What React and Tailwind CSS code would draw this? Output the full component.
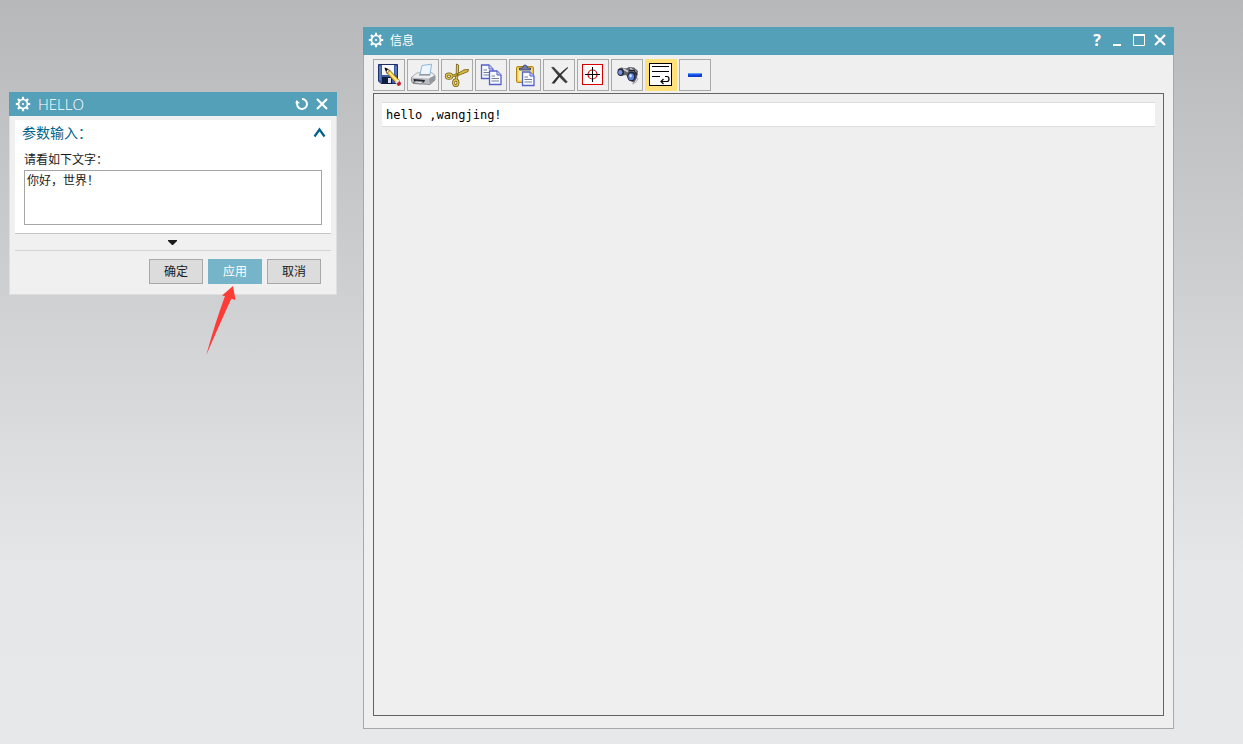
import React from "react";

function GearIcon() {
  return (
    <svg width="16" height="16" viewBox="-8 -8 16 16" aria-hidden="true" className="shrink-0">
      <g fill="white">
        {[0, 45, 90, 135, 180, 225, 270, 315].map((a) => (
          <rect key={a} x="-1.1" y="-7.2" width="2.2" height="2.8" transform={`rotate(${a})`} />
        ))}
      </g>
      <circle r="4.5" fill="none" stroke="white" strokeWidth="1.7" />
      <circle r="1.1" fill="white" />
    </svg>
  );
}

function CloseIcon() {
  return (
    <svg width="12" height="12" viewBox="0 0 12 12" aria-hidden="true">
      <path d="M1 1 L11 11 M11 1 L1 11" stroke="white" strokeWidth="2.1" />
    </svg>
  );
}

function PageShape({ x, y }) {
  return (
    <g transform={`translate(${x} ${y})`}>
      <path d="M0.5 0.5 H8 L12 4.5 V14 H0.5 Z" fill="#f7f9ff" stroke="#5560c8" strokeWidth="1.3" />
      <path d="M8 0.5 V4.5 H12" fill="#c9d0f5" stroke="#5560c8" />
      <path d="M2.5 5.5 H6 M2.5 8 H10 M2.5 10.5 H10" stroke="#77809a" strokeWidth="1.1" />
    </g>
  );
}

function SaveIcon() {
  return (
    <>
      <path d="M4.5 4.5 H23.5 V23.5 H7 L4.5 21 Z" fill="#3f5ca6" stroke="#1b2f6d" />
      <rect x="8" y="5" width="12" height="10" fill="#f7f9ff" />
      <rect x="8" y="17" width="10" height="7" fill="#101c3c" />
      <rect x="14" y="18" width="3" height="5" fill="#d7def2" />
      <path d="M6 6 V20 M22 6 V15" stroke="#7d93cc" />
      <path d="M11.5 8.5 L16 10.5 L25.3 20.3 L22.3 23.3 L13.3 13.5 Z" fill="#f7c62e" stroke="#7c5210" strokeWidth="0.7" />
      <path d="M11 8 L16 10.5 L13 13.5 Z" fill="#f6dfae" stroke="#000" strokeWidth="0.5" />
      <path d="M10.5 7.5 L14 9 L12 11.5 Z" fill="#000" />
      <path d="M15 12 L23.5 21.3" stroke="#fff2a0" strokeWidth="1.3" />
      <path d="M21.2 22.6 L24.2 19.6 L25.5 21 L22.5 24 Z" fill="#e8e8ee" />
      <path d="M22.5 24 L25.5 21 L27 23 Q27 26 24 26 Z" fill="#c8202a" />
    </>
  );
}

function PrintIcon() {
  return (
    <>
      <path d="M3.5 17.5 L9 13 H24 L27 15.5 V20 L22 24.5 L5 23.5 L3.5 21 Z" fill="#b9bdc1" stroke="#7c8287" strokeWidth="0.8" />
      <path d="M3.8 17.5 L9 13.3 H24 L26.6 15.5 L21 18.5 Z" fill="#eceef0" />
      <path d="M21 18.5 L26.8 15.5 V20 L22 24 Z" fill="#92989e" />
      <path d="M12 14.5 L14 5.5 L23.5 4.2 L22 14.5 Z" fill="#edf6ff" stroke="#78a4cf" strokeWidth="0.8" />
      <path d="M5.5 19 L17 20 L16 22.5 L6 21.5 Z" fill="#24282c" />
      <path d="M5 22.5 L8 21 L15 21.5 L13 24 Z" fill="#dfe3e6" stroke="#555b60" strokeWidth="0.6" />
      <path d="M11 15 H22" stroke="#7c8287" />
    </>
  );
}

function CutIcon() {
  return (
    <>
      <g fill="none" stroke="#6e5a12" strokeWidth="2.8">
        <ellipse cx="7" cy="16.2" rx="2.8" ry="2.2" />
        <ellipse cx="13.8" cy="22.8" rx="2.2" ry="2.8" />
      </g>
      <path d="M14.5 4 L16.6 5 L16.4 14 L14.6 20.5 L13 19.8 L14.2 14 Z" fill="#e6cc55" stroke="#6e5a12" strokeWidth="0.8" />
      <path d="M26.5 9.5 L26 11.6 L17 15.2 L10 17 L9.5 15.4 L16 13.4 L22 9.8 Z" fill="#d9bb3e" stroke="#6e5a12" strokeWidth="0.8" />
      <g fill="none" stroke="#dfc450" strokeWidth="1.4">
        <ellipse cx="7" cy="16.2" rx="2.8" ry="2.2" />
        <ellipse cx="13.8" cy="22.8" rx="2.2" ry="2.8" />
      </g>
      <circle cx="15.6" cy="14.5" r="0.8" fill="#6e5a12" />
    </>
  );
}

function CopyIcon() {
  return (
    <>
      <PageShape x={5} y={4.5} />
      <PageShape x={13} y={10.5} />
    </>
  );
}

function PasteIcon() {
  return (
    <>
      <rect x="6.5" y="6.5" width="17" height="16" rx="1.5" fill="#f5cb45" stroke="#b3861a" />
      <rect x="8.5" y="9" width="13" height="11.5" fill="#fdf3b8" />
      <path d="M9.5 10 V8 H12.5 Q13 5 15 5 Q17 5 17.5 8 H20.5 V10 Z" fill="#6f7fae" stroke="#36436e" strokeWidth="0.9" />
      <PageShape x={12} y={11.5} />
    </>
  );
}

function DeleteIcon() {
  return (
    <>
      <path d="M7.5 7.5 L9.5 7 Q16 13.5 23.5 22 L21.5 23 Q14 16 7.5 7.5 Z" fill="#3a3d3a" stroke="#3a3d3a" strokeWidth="0.4" />
      <path d="M23.5 7 L24 8 Q16 15 10.5 23.5 L7.5 23.5 Q14 14.5 23.5 7 Z" fill="#2c2f2c" />
    </>
  );
}

function TargetIcon() {
  return (
    <>
      <rect x="4.5" y="4.5" width="20" height="20" fill="white" stroke="#d40000" />
      <circle cx="14.5" cy="14.5" r="4.5" fill="none" stroke="#d40000" strokeWidth="1.2" />
      <path d="M14.5 7 V22 M7 14.5 H22" stroke="black" />
    </>
  );
}

function FindIcon() {
  return (
    <>
      <path d="M5.5 9.5 L9 7.5 L14 8.5 L17 7 L22 7.5 L26 11 L25 18 L22 23 L17 20 L14 15 L8 16 Z" fill="#62656e" />
      <path d="M11 9 L16 11.5 M18 8.5 L24 12" stroke="#d0d2d8" strokeWidth="1.5" />
      <path d="M17 10.5 L22 10.5 L25 15" fill="none" stroke="#23252b" strokeWidth="1.4" />
      <ellipse cx="8.7" cy="12.3" rx="3.3" ry="3.8" fill="#24283a" />
      <ellipse cx="8.3" cy="12.3" rx="2.1" ry="2.6" fill="#6f91de" />
      <ellipse cx="19.5" cy="16.5" rx="4.2" ry="4.8" fill="#20243a" />
      <ellipse cx="19.2" cy="16.7" rx="2.9" ry="3.5" fill="#5b80da" />
      <ellipse cx="18.6" cy="15.8" rx="1.3" ry="1.7" fill="#cfe0ff" />
      <path d="M20 24 Q25 23 26 18" fill="none" stroke="#b8b8bb" strokeWidth="1.2" />
    </>
  );
}

function WrapIcon() {
  return (
    <>
      <rect x="3.5" y="3.5" width="22" height="22" fill="white" stroke="black" />
      <path d="M6 6.5 H23 M6 11.5 H23 M6 16.5 H14" stroke="black" />
      <path d="M19 16.5 H21 Q23 16.5 23 19 Q23 21.5 21 21.5 H15 M17.5 19 L15 21.5 L17.5 24" fill="none" stroke="black" strokeWidth="1.2" />
    </>
  );
}

function MinusIcon() {
  return (
    <>
      <rect x="8" y="13" width="14" height="4" fill="#0d3fd0" />
      <rect x="8" y="13" width="14" height="1" fill="#5f9bff" />
      <rect x="9" y="14" width="11" height="1" fill="#1e62f5" />
    </>
  );
}

const tools = [
  { name: "保存", Icon: SaveIcon },
  { name: "打印", Icon: PrintIcon },
  { name: "剪切", Icon: CutIcon },
  { name: "复制", Icon: CopyIcon },
  { name: "粘贴", Icon: PasteIcon },
  { name: "删除", Icon: DeleteIcon },
  { name: "定位", Icon: TargetIcon },
  { name: "查找", Icon: FindIcon },
  { name: "自动换行", Icon: WrapIcon, active: true },
  { name: "收起", Icon: MinusIcon },
];

function HelloDialog() {
  return (
    <section className="relative mt-[65px] w-[328px] shrink-0">
      <header className="flex h-6 items-center bg-[#54a0b9] pr-[9px] pl-1.5 text-white">
        <GearIcon />
        <h1 className="ml-[7px] grow text-[15px] font-light">HELLO</h1>
        <button aria-label="重置" className="mr-[7px]">
          <svg width="14" height="14" viewBox="0 0 14 14" aria-hidden="true">
            <path d="M7 2 A5 5 0 1 1 2.3 5.4" fill="none" stroke="white" strokeWidth="2" />
            <path d="M0.2 6.2 L1.6 3 L5 6.2 Z" fill="white" />
          </svg>
        </button>
        <button aria-label="关闭">
          <CloseIcon />
        </button>
      </header>
      <div className="border-x border-b border-[#dddee0] bg-[#f0f0f0] px-[5px] pt-1 pb-2.5">
        <div className="border-b border-[#c6c6c6] bg-white px-[9px] pb-2">
          <div className="-ml-0.5 flex h-[30px] items-start justify-between pt-1">
            <h2 className="text-[14px] leading-[18px] text-[#00638a]">参数输入：</h2>
            <button aria-label="折叠" className="-mr-1 pt-[3px]">
              <svg width="13" height="11" viewBox="0 0 13 11" aria-hidden="true">
                <path d="M1.5 9.5 L6.5 2.5 L11.5 9.5" fill="none" stroke="#00638a" strokeWidth="2.2" />
              </svg>
            </button>
          </div>
          <label htmlFor="message" className="block h-5 text-xs leading-5">请看如下文字：</label>
          <textarea
            id="message"
            defaultValue="你好，世界！"
            className="block h-[55px] w-full resize-none border border-[#a5a5a5] bg-white px-0.5 py-0.5 text-xs outline-none"
          />
        </div>
        <button aria-label="更多" className="flex h-[17px] w-full items-center justify-center border-b border-[#d3d3d3] pt-px">
          <svg width="10" height="5" viewBox="0 0 10 5" aria-hidden="true">
            <path d="M0 0 H9 V1 L5 5 H4 L0 1 Z" fill="#1c1c1c" />
          </svg>
        </button>
        <div className="mt-2 flex justify-end gap-[5px] pr-2.5 text-xs">
          <button className="h-[25px] w-[54px] border border-[#a8a8a8] bg-[#dcdcdc]">确定</button>
          <button className="h-[25px] w-[54px] bg-[#75b4c9] text-white">应用</button>
          <button className="h-[25px] w-[54px] border border-[#a8a8a8] bg-[#dcdcdc]">取消</button>
        </div>
      </div>
      <svg className="pointer-events-none absolute top-[193px] left-[196px]" width="32" height="72" viewBox="0 0 32 72" aria-hidden="true">
        <path d="M28 1 L30.5 15 L26.3 13.7 Q16 36 1.3 70 Q10 38 20 11 L17 10.5 Z" fill="#ff3b38" />
      </svg>
    </section>
  );
}

function InfoWindow() {
  return (
    <section className="flex min-w-0 grow flex-col">
      <header className="flex h-7 shrink-0 items-center bg-[#54a0b9] pr-2 pb-0.5 pl-[5px] text-white">
        <GearIcon />
        <h1 className="ml-1.5 grow pt-0.5 text-xs">信息</h1>
        <button aria-label="帮助" className="w-4 font-['Open_Sans','Liberation_Sans',sans-serif] text-base leading-5 font-bold">?</button>
        <button aria-label="最小化" className="ml-2">
          <svg width="8" height="12" viewBox="0 0 8 12" aria-hidden="true">
            <path d="M0 11 H8" stroke="white" strokeWidth="2" />
          </svg>
        </button>
        <button aria-label="最大化" className="ml-3">
          <svg width="12" height="12" viewBox="0 0 12 12" aria-hidden="true">
            <path d="M0.5 1 V11.5 H11.5 V1" fill="none" stroke="white" />
            <path d="M0 1 H12" stroke="white" strokeWidth="2" />
          </svg>
        </button>
        <button aria-label="关闭" className="ml-[9px]">
          <CloseIcon />
        </button>
      </header>
      <div className="flex grow flex-col border-x border-b border-[#a8a8a8] bg-[#efefef] px-[9px] pt-1 pb-3">
        <div className="flex gap-0.5">
          {tools.map(({ name, Icon, active }) => (
            <button
              key={name}
              aria-label={name}
              className={
                active
                  ? "size-8 border border-[#ffe07a] bg-[#ffe07a]"
                  : "size-8 border border-[#a9a9a9] bg-[#f0f0f0]"
              }
            >
              <svg width="30" height="30" viewBox="0 0 30 30" aria-hidden="true">
                <Icon />
              </svg>
            </button>
          ))}
        </div>
        <div className="mt-0.5 grow border border-[#636363] p-2">
          <input
            aria-label="信息内容"
            readOnly
            value="hello ,wangjing!"
            className="block h-[25px] w-full border-y border-[#dddddd] bg-white px-1 font-['DejaVu_Sans_Mono',monospace] text-xs text-black outline-none"
          />
        </div>
      </div>
    </section>
  );
}

export default function App() {
  return (
    <main
      lang="zh-CN"
      className="flex min-h-screen gap-[26px] bg-linear-to-b from-[#b7b8ba] via-[#e5e7e9] via-77% to-[#e7e8ea] pt-[27px] pr-[69px] pb-[15px] pl-[9px] font-['Open_Sans','Noto_Sans_CJK_SC',sans-serif] text-[#1a1a1a]"
    >
      <div>
        <HelloDialog />
      </div>
      <InfoWindow />
    </main>
  );
}
